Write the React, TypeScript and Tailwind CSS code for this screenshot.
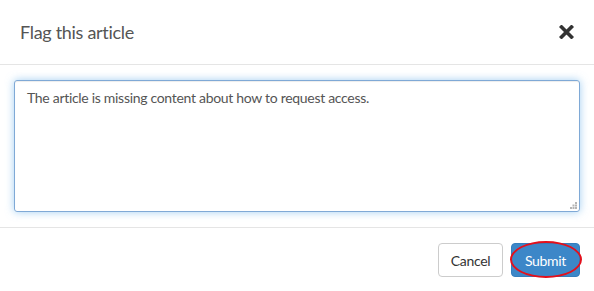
export default function App() {
  return (
    <div className="w-[594px] h-[291px] bg-white font-['Lato','Noto_Sans',sans-serif] text-[#555] tracking-[-0.3px]">
      {/* header */}
      <div className="h-[65px] flex items-center justify-between pl-[20px] pr-[20px] border-b border-[#e5e5e5]">
        <h4 className="text-[18px] text-[#555] leading-none">Flag this article</h4>
        <button className="w-[16px] h-[16px] flex items-center justify-center text-[#333]">
          <svg width="15" height="14" viewBox="0 0 15 14">
            <path d="M2.5 2 L12.5 12 M12.5 2 L2.5 12" stroke="currentColor" strokeWidth="3.6" strokeLinecap="square" />
          </svg>
        </button>
      </div>

      {/* body */}
      <div className="px-[14px] pt-[15px] pb-[15px]">
        <div className="relative">
          <textarea
            readOnly
            defaultValue="The article is missing content about how to request access."
            className="block w-full h-[132px] resize-none rounded-[3px] border border-[#7fa9d6] px-[12px] py-[7px] text-[14px] leading-[20px] text-[#555] tracking-[-0.3px] outline-none shadow-[inset_0_1px_1px_rgba(0,0,0,0.075),0_0_8px_rgba(102,175,233,0.6)]"
          />
          {/* resize grip */}
          <svg className="absolute right-[3px] bottom-[3px]" width="7" height="7" viewBox="0 0 7 7">
            <rect x="5" y="0" width="2" height="2" fill="#b5b5b5" />
            <rect x="2.5" y="2.5" width="2" height="2" fill="#b5b5b5" />
            <rect x="5" y="2.5" width="2" height="2" fill="#b5b5b5" />
            <rect x="0" y="5" width="2" height="2" fill="#b5b5b5" />
            <rect x="2.5" y="5" width="2" height="2" fill="#b5b5b5" />
            <rect x="5" y="5" width="2" height="2" fill="#b5b5b5" />
          </svg>
        </div>
      </div>

      {/* footer */}
      <div className="border-t border-[#e5e5e5] flex justify-end gap-[8px] pt-[15px] pr-[14px]">
        <button className="h-[34px] w-[65px] rounded-[4px] border border-[#ccc] bg-white text-[14px] text-[#333]">
          Cancel
        </button>
        <div className="relative">
          <button className="h-[34px] w-[69px] rounded-[4px] border border-[#357ebd] bg-[#3c87c8] text-[14px] text-white">
            Submit
          </button>
          <div className="absolute left-[-1px] top-[-2px] w-[72px] h-[37px] rounded-[50%] border-2 border-[#e3101c] pointer-events-none" />
        </div>
      </div>
    </div>
  );
}
